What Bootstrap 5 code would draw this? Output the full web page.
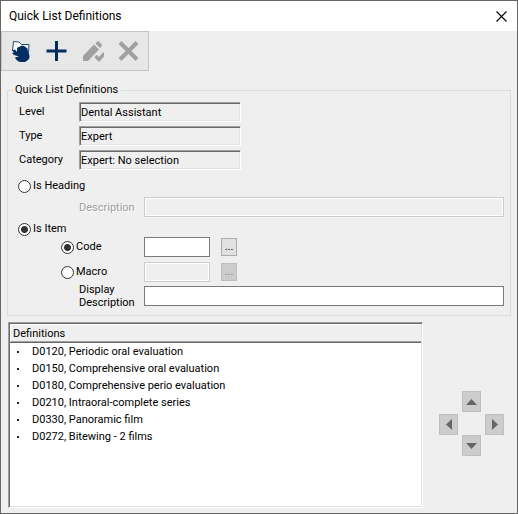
<!DOCTYPE html>
<html lang="en">
<head>
<meta charset="utf-8">
<meta name="viewport" content="width=device-width, initial-scale=1">
<title>Quick List Definitions</title>
<link href="https://cdn.jsdelivr.net/npm/bootstrap@5.3.0/dist/css/bootstrap.min.css" rel="stylesheet">
<style>
body { font: 11px/14px Roboto, "Liberation Sans", sans-serif; color: #000; background: #efefef; }
.dialog { border: 1px solid #666; background: #efefef; }
.titlebar { height: 30px; background: #fff; padding: 0 10px 0 8px; }
.titlebar h1 { font: 12px/16px Roboto, "Open Sans", sans-serif; }
.closer { width: 11px; height: 11px; }
button svg { display: block; }
.tools { width: 148px; height: 40px; background: #e7e7e7; border: 1px solid #c5c5c5; }
.tool { width: 36px; height: 36px; padding: 6px; }
.group { margin: 11px 6px 0; border: 1px solid #dcdcdc; padding: 4px 6px 6px 10px; }
.group legend { font-size: 11px; line-height: 16px; padding: 0 3px 0 2px; margin-left: -5px; }
.lbl { width: 61px; padding-left: 1px; }
.sunken { width: 162px; height: 20px; padding: 0 1px; border: 1px solid; border-color: #a0a0a0 #fff #fff #a0a0a0; box-shadow: inset 1px 1px #696969, inset -1px -1px #e3e3e3; background: #efefef; color: #000; font-size: 11px; outline: 0; }
.level { gap: 4px; }
.pick { height: 16px; gap: 2px; }
.pick label { line-height: 16px; }
.pick-top { margin-top: 8px; }
.row-item { margin-top: 4px; }
.row-desc { margin-top: 3px; }
.sub { width: 126px; flex: none; }
.sub.pick { padding-left: 43px; }
.sub.cap { padding-left: 61px; line-height: 13px; }
.dim { color: #a0a0a0; text-shadow: 1px 1px #fff; }
input[type=radio] { appearance: none; width: 13px; height: 13px; margin: 0; flex: none; border: 1px solid #333; border-radius: 50%; background: #fff; }
input[type=radio]:checked { background: radial-gradient(circle, #333 3px, #fff 4px); }
.box { height: 20px; border: 1px solid #7a7a7a; background: #fff; padding: 0 3px; font-size: 11px; min-width: 0; }
.box:disabled { background: #efefef; border-color: #ccc; box-shadow: inset 0 0 0 1px #fff; }
.short { width: 66px; }
.dots { width: 16px; height: 18px; margin-left: 11px; border: 1px solid #adadad; background: #e1e1e1; color: #000; padding: 0; line-height: 14px; }
.dots:disabled { background: #ccc; border-color: #bfbfbf; color: #838383; }
.row-macro { margin-top: 5px; }
.row-display { margin-top: 1px; }
.lower { padding: 6px 13px 5px 7px; gap: 16px; }
.listing { min-height: 186px; background: #fff; border: 1px solid; border-color: #a0a0a0 #fff #fff #a0a0a0; box-shadow: inset 1px 1px #696969, inset -1px -1px #e3e3e3; padding: 1px; }
.listing h2 { font-size: 11px; line-height: 14px; padding: 3px 3px 0; background: #efefef; border-bottom: 1px solid #696969; box-shadow: inset 1px 1px #fff, inset 0 -1px #a0a0a0; height: 19px; font-weight: 400; }
.listing li { height: 17px; line-height: 17px; padding-left: 7px; gap: 13px; }
.listing li::before { content: ""; width: 2px; height: 2px; background: #222; }
.pad { display: grid; grid-template-columns: 19px 19px 19px; column-gap: 4px; flex: none; padding-top: 69px; }
.arrow { width: 19px; height: 21px; background: #ccc; border: 1px solid #bfbfbf; }
.up, .down { grid-column: 2; }
.down { grid-row: 3; }
.left { grid-column: 1; }
.right { grid-column: 3; }
.left, .right { grid-row: 2; margin-top: 2px; }
</style>
<script src="https://cdn.jsdelivr.net/npm/bootstrap@5.3.0/dist/js/bootstrap.bundle.min.js"></script>
</head>
<body>
<main class="dialog min-vh-100">
  <header class="titlebar d-flex align-items-center justify-content-between">
    <h1 class="m-0">Quick List Definitions</h1>
    <button type="button" class="closer border-0 bg-transparent p-0" aria-label="Close"><svg width="11" height="11" viewBox="0 0 11 11"><path d="M.5.5l10 10M10.5.5l-10 10" stroke="#000" stroke-width="1.1"/></svg></button>
  </header>
  <div class="tools d-flex align-items-center" role="toolbar" aria-label="Definition tools">
    <button type="button" class="tool border-0 bg-transparent" aria-label="Select"><svg width="24" height="24" viewBox="0 0 24 24"><path d="M4.500 12l1-9.500 5.500.5 2.500 2.500h7.500l-.5 9" fill="#fff" stroke="#264b73"/><path d="M4 11.500l3-1 2 2.500V10c0-1.500 1-2 2-2l3-1.500L16 7l1.500 1 2 1.500c.5 2 0 2.500 1 4.500 1.500 3 1.500 5-.5 7l-3 2h-5c-2-.5-2.500-1.500-4-2.500l-1-2 4-1-5-1.500-2-2 2-.500z" fill="#002e62"/></svg></button>
    <button type="button" class="tool border-0 bg-transparent" aria-label="Add"><svg width="24" height="24" viewBox="0 0 24 24"><path d="M12.500 2v20M2.500 12h20" stroke="#002e62" stroke-width="3"/></svg></button>
    <button type="button" class="tool border-0 bg-transparent" aria-label="Edit" disabled><svg width="24" height="24" viewBox="0 0 24 24" fill="#a0a0a0"><path d="M3 17L14 5.500l5 5L8 22H3zM15.500 4.500l1.500-1.700c.6-.6 1.400-.6 2 0l2.500 2.500c.6.6.6 1.400 0 2L20 9z"/><path d="M15.500 17l3.500 3.500 5.500-6" fill="none" stroke="#a0a0a0" stroke-width="3.400"/></svg></button>
    <button type="button" class="tool border-0 bg-transparent" aria-label="Delete" disabled><svg width="24" height="24" viewBox="0 0 24 24"><path d="M4 3.500l17 17M21 3.500l-17 17" stroke="#a0a0a0" stroke-width="4"/></svg></button>
  </div>
  <form>
    <fieldset class="group">
      <legend class="float-none w-auto mb-0">Quick List Definitions</legend>
      <div class="level d-flex flex-column">
        <div class="d-flex align-items-center"><label class="lbl" for="level">Level</label><input class="sunken" id="level" value="Dental Assistant" readonly></div>
        <div class="d-flex align-items-center"><label class="lbl" for="type">Type</label><input class="sunken" id="type" value="Expert" readonly></div>
        <div class="d-flex align-items-center"><label class="lbl" for="category">Category</label><input class="sunken" id="category" value="Expert: No selection" readonly></div>
      </div>
      <div class="pick pick-top d-flex align-items-center"><input type="radio" name="kind" id="heading"><label for="heading">Is Heading</label></div>
      <div class="row-desc d-flex align-items-center"><label class="sub cap dim" for="desc">Description</label><input class="box flex-fill" id="desc" disabled></div>
      <div class="pick row-item d-flex align-items-center"><input type="radio" name="kind" id="item" checked><label for="item">Is Item</label></div>
      <div class="d-flex align-items-center"><div class="sub pick d-flex align-items-center"><input type="radio" name="source" id="code" checked><label for="code">Code</label></div><input class="box short" aria-label="Code value"><button type="button" class="dots" aria-label="Browse codes">...</button></div>
      <div class="row-macro d-flex align-items-center"><div class="sub pick d-flex align-items-center"><input type="radio" name="source" id="macro"><label for="macro">Macro</label></div><input class="box short" aria-label="Macro value" disabled><button type="button" class="dots" aria-label="Browse macros" disabled>...</button></div>
      <div class="row-display d-flex align-items-center"><label class="sub cap" for="display">Display<br>Description</label><input class="box flex-fill" id="display"></div>
    </fieldset>
  </form>
  <section class="lower d-flex align-items-start">
    <div class="listing flex-fill">
      <h2 class="m-0">Definitions</h2>
      <ul class="list-unstyled m-0">
        <li class="d-flex align-items-center">D0120, Periodic oral evaluation</li>
        <li class="d-flex align-items-center">D0150, Comprehensive oral evaluation</li>
        <li class="d-flex align-items-center">D0180, Comprehensive perio evaluation</li>
        <li class="d-flex align-items-center">D0210, Intraoral-complete series</li>
        <li class="d-flex align-items-center">D0330, Panoramic film</li>
        <li class="d-flex align-items-center">D0272, Bitewing - 2 films</li>
      </ul>
    </div>
    <div class="pad">
      <button type="button" class="arrow up d-flex align-items-center justify-content-center p-0" aria-label="Move up" disabled><svg width="11" height="6" viewBox="0 0 11 6"><path d="M0 6l5.500-6L11 6z" fill="#666"/></svg></button>
      <button type="button" class="arrow left d-flex align-items-center justify-content-center p-0" aria-label="Move left" disabled><svg width="6" height="11" viewBox="0 0 6 11"><path d="M6 0L0 5.500 6 11z" fill="#666"/></svg></button>
      <button type="button" class="arrow right d-flex align-items-center justify-content-center p-0" aria-label="Move right" disabled><svg width="6" height="11" viewBox="0 0 6 11"><path d="M0 0l6 5.500L0 11z" fill="#666"/></svg></button>
      <button type="button" class="arrow down d-flex align-items-center justify-content-center p-0" aria-label="Move down" disabled><svg width="11" height="6" viewBox="0 0 11 6"><path d="M0 0h11L5.500 6z" fill="#666"/></svg></button>
    </div>
  </section>
</main>
</body>
</html>
